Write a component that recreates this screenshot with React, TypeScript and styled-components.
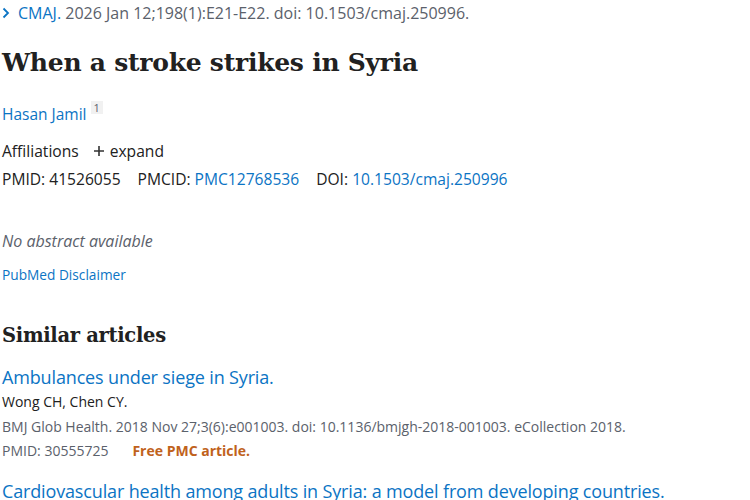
import React from "react";
import styled, { createGlobalStyle } from "styled-components";

const Global = createGlobalStyle`
  html, body { margin: 0; padding: 0; background: #fff; }
  body { font-family: "Open Sans", "Noto Sans", sans-serif; color: #212121; }
`;

const Page = styled.div`
  width: 750px;
  height: 500px;
  overflow: hidden;
  padding-left: 2px;
  box-sizing: border-box;
`;

const Link = styled.a`
  color: #0b74c4;
  text-decoration: none;
`;

const CiteLine = styled.div`
  display: flex;
  align-items: center;
  font-size: 16px;
  line-height: 26px;
  color: #5b616b;
  white-space: nowrap;
`;

const Chevron = styled.svg`
  width: 8px;
  height: 12px;
  margin-right: 8px;
  flex: none;
`;

const Title = styled.h1`
  margin: 19px 0 0;
  font-family: "DejaVu Serif", serif;
  font-weight: 700;
  font-size: 25px;
  line-height: 36px;
  letter-spacing: -0.25px;
  color: #212121;
`;

const Authors = styled.div`
  margin-top: 20px;
  font-size: 15.5px;
  line-height: 24px;
`;

const Sup = styled.sup`
  display: inline-block;
  margin-left: 4px;
  padding: 0 3px;
  background: #f1f1f1;
  color: #5b616b;
  font-size: 11px;
  line-height: 13px;
  vertical-align: 8px;
`;

const Row = styled.div<{ $mt: number }>`
  margin-top: ${(p) => p.$mt}px;
  display: flex;
  align-items: center;
  font-size: 15.6px;
  line-height: 24px;
  color: #212121;
  white-space: nowrap;
`;

const Expand = styled.span`
  display: inline-flex;
  align-items: center;
  margin-left: 14px;
  gap: 5px;
`;

const IdItem = styled.span`
  margin-right: 17px;
`;

const NoAbstract = styled.div`
  margin-top: 38px;
  font-size: 16px;
  line-height: 24px;
  font-style: italic;
  color: #5b616b;
`;

const Disclaimer = styled.div`
  margin-top: 12px;
  font-size: 13.7px;
  line-height: 20px;
`;

const SectionTitle = styled.h2`
  margin: 36px 0 0;
  font-family: "DejaVu Serif", serif;
  font-weight: 700;
  font-size: 19.5px;
  line-height: 30px;
  letter-spacing: -0.3px;
  color: #212121;
`;

const ArticleTitle = styled.div<{ $mt: number }>`
  margin-top: ${(p) => p.$mt}px;
  font-size: 18px;
  line-height: 26px;
  letter-spacing: -0.15px;
  white-space: nowrap;
`;

const Snippet = styled.div<{ $tone: "dark" | "gray" }>`
  font-size: 14px;
  line-height: 24.5px;
  color: ${(p) => (p.$tone === "dark" ? "#212121" : "#5b616b")};
  white-space: nowrap;
`;

const FreeTag = styled.span`
  margin-left: 24px;
  color: #c0621c;
  font-weight: 700;
`;

export default function App() {
  return (
    <>
      <Global />
      <Page>
        <CiteLine>
          <Chevron viewBox="0 0 8 12">
            <path d="M1.5 1.5 L6 6 L1.5 10.5" fill="none" stroke="#0b74c4" strokeWidth="1.8" />
          </Chevron>
          <Link href="#">CMAJ.</Link>&nbsp;2026 Jan 12;198(1):E21-E22. doi: 10.1503/cmaj.250996.
        </CiteLine>
        <Title>When a stroke strikes in Syria</Title>
        <Authors>
          <Link href="#">Hasan Jamil</Link>
          <Sup>1</Sup>
        </Authors>
        <Row $mt={13}>
          Affiliations
          <Expand>
            <svg width="12" height="12" viewBox="0 0 12 12">
              <path d="M6 1 V11 M1 6 H11" stroke="#333" strokeWidth="1.6" />
            </svg>
            expand
          </Expand>
        </Row>
        <Row $mt={4}>
          <IdItem>PMID: 41526055</IdItem>
          <IdItem>
            PMCID: <Link href="#">PMC12768536</Link>
          </IdItem>
          <span>
            DOI: <Link href="#">10.1503/cmaj.250996</Link>
          </span>
        </Row>
        <NoAbstract>No abstract available</NoAbstract>
        <Disclaimer>
          <Link href="#">PubMed Disclaimer</Link>
        </Disclaimer>
        <SectionTitle>Similar articles</SectionTitle>
        <ArticleTitle $mt={13}>
          <Link href="#">Ambulances under siege in Syria.</Link>
        </ArticleTitle>
        <Snippet $tone="dark">Wong CH, Chen CY.</Snippet>
        <Snippet $tone="gray">
          BMJ Glob Health. 2018 Nov 27;3(6):e001003. doi: 10.1136/bmjgh-2018-001003. eCollection 2018.
        </Snippet>
        <Snippet $tone="gray">
          PMID: 30555725
          <FreeTag>Free PMC article.</FreeTag>
        </Snippet>
        <ArticleTitle $mt={14}>
          <Link href="#">Cardiovascular health among adults in Syria: a model from developing countries.</Link>
        </ArticleTitle>
      </Page>
    </>
  );
}
